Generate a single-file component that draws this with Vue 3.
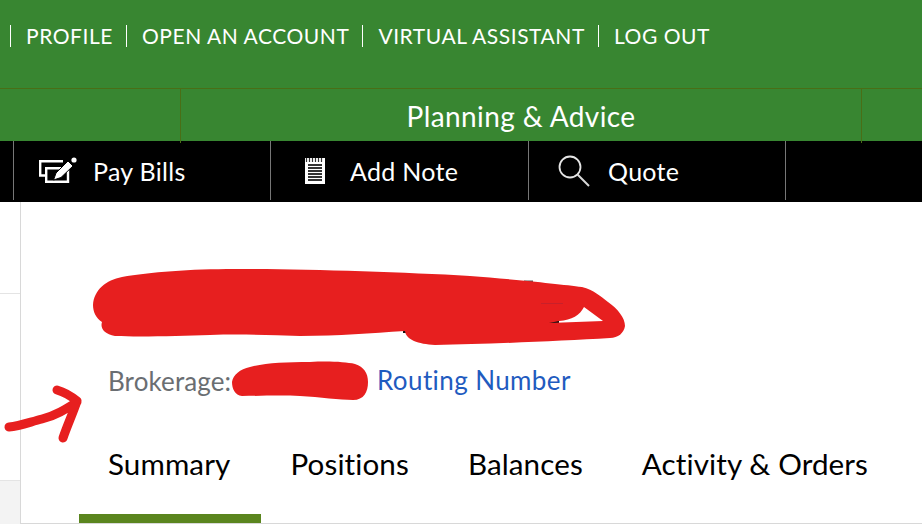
<script setup>
const links = ['PROFILE', 'OPEN AN ACCOUNT', 'VIRTUAL ASSISTANT', 'LOG OUT']
const tabs = ['Summary', 'Positions', 'Balances', 'Activity & Orders']
</script>

<template>
  <div class="page">
    <header class="top">
      <a v-for="l in links" :key="l" class="top-link">{{ l }}</a>
    </header>
    <nav class="nav">
      <div class="nav-side"></div>
      <div class="nav-main">Planning &amp; Advice</div>
      <div class="nav-end"></div>
    </nav>
    <div class="tools">
      <div class="tool">
        <svg class="ic-pay" width="38" height="27" viewBox="0 0 38 27">
          <path d="M24 4.200H1.200V18.500H7" fill="none" stroke="#fff" stroke-width="2.400" />
          <path d="M7.200 11.200H29V24.800H7.200Z" fill="none" stroke="#fff" stroke-width="2.400" />
          <path d="M14.500 23L17 16L29 4L34 9L22 20.500Z" fill="#fff" stroke="#000" stroke-width="1" />
          <circle cx="35" cy="3" r="2.600" fill="#fff" />
        </svg>
        <span>Pay Bills</span>
      </div>
      <div class="tool tool-note">
        <svg class="ic-note" width="20" height="26" viewBox="0 0 20 26">
          <rect width="20" height="26" fill="#fff" />
          <path d="M1.500 0v4M4.500 0v4M7.500 0v4M10.500 0v4M13.500 0v4M16.500 0v4" stroke="#333" stroke-width="1.200" />
          <path d="M3 7H17M3 10H17M3 13H17M3 16H17M3 19H17M3 22H17" stroke="#333" stroke-width="1.800" />
        </svg>
        <span>Add Note</span>
      </div>
      <div class="tool tool-quote">
        <svg class="ic-quote" width="34" height="34" viewBox="0 0 34 34">
          <circle cx="13" cy="13" r="10.500" fill="none" stroke="#e4e4e4" stroke-width="1.800" />
          <path d="M20.500 20.500L32 32" stroke="#d8d8d8" stroke-width="2" />
        </svg>
        <span>Quote</span>
      </div>
    </div>
    <div class="body">
      <aside class="side">
        <div class="side-a"></div>
        <div class="side-b"></div>
        <div class="side-c"></div>
      </aside>
      <main class="panel">
        <div class="acct">
          <span class="acct-label">Brokerage:</span>
          <a class="acct-link">Routing Number</a>
        </div>
        <div class="tabs">
          <div v-for="(t, i) in tabs" :key="t" class="tab" :class="{ active: i === 0 }">{{ t }}</div>
        </div>
      </main>
    </div>
    <svg class="marks" width="922" height="524" viewBox="0 0 922 524">
      <path fill="#555" d="M524 280.500H533V283H524Z" />
      <path fill="#111" d="M403 329H407V333H403Z" />
      <path fill="#111" d="M549 321H559V324H549Z" />
      <path fill="#e71f1f" fill-rule="evenodd" d="M93 305C94 290 106 280 122 277C150 272 190 269 235 269C300 269 400 272 470 276C510 279 560 284 582 287C594 290 600 296 608 302C618 309 625 318 625 326C624 333 618 338 610 338C560 341 490 344 435 345C418 344 406 340 405 331C370 333 340 336 300 336C270 335 240 334 210 335C180 336 140 337 115 336C104 334 100 328 102 322C96 318 93 312 93 305ZM584 307C580 315 572 320 559 321L549 323L603 321Z" />
      <path fill="#c8202a" d="M541 303H563V304H541Z" />
      <path fill="#e71f1f" d="M232 382C233 375 240 369 250 367C265 363 285 362 310 362C330 361 345 362 355 364C364 367 368 373 368 382C368 392 364 400 353 400C340 400 320 397 300 396C280 395 260 396 242 396C235 395 232 389 232 382Z" />
      <path fill="none" stroke="#e71f1f" stroke-width="9" stroke-linecap="round" stroke-linejoin="round" d="M9 427C20 426 30 422 42 419C55 416 66 409 77 402M57 390C64 392 71 396 77 401C73 413 67 426 63 438" />
    </svg>
  </div>
</template>

<style scoped>
.page {
  position: relative;
  width: 922px;
  height: 524px;
  overflow: hidden;
  background: #fff;
  font-family: Lato, "Open Sans", sans-serif;
}
.top {
  height: 88px;
  box-sizing: border-box;
  padding: 25px 0 0 10px;
  display: flex;
  align-items: flex-start;
  background: #388631;
}
.top-link {
  height: 22px;
  line-height: 21px;
  border-left: 1px solid #fff;
  padding: 0 13px 0 15px;
  color: #fff;
  font-size: 21px;
  letter-spacing: 0.55px;
  white-space: nowrap;
}
.nav {
  height: 53px;
  box-sizing: border-box;
  border-top: 1px solid #4a6e16;
  display: grid;
  grid-template-columns: 180px 682px 60px;
  background: #388631;
}
.nav-main {
  border-left: 1px solid #4a6e16;
  border-right: 1px solid #4a6e16;
  text-align: center;
  color: #fff;
  font-size: 28px;
  line-height: 54px;
  letter-spacing: 0.4px;
}
.tools {
  height: 61px;
  box-sizing: border-box;
  padding: 0 0 2px 13px;
  display: grid;
  grid-template-columns: 257px 258px 258px;
  background: #000;
}
.tool {
  display: flex;
  align-items: center;
  gap: 16px;
  padding-left: 25px;
  border-left: 1px solid #777;
  color: #fff;
  font-size: 25px;
  letter-spacing: 0.3px;
  white-space: nowrap;
}
.tool-note {
  gap: 25px;
  padding-left: 34px;
}
.tool-quote {
  gap: 17px;
  padding-left: 28px;
  border-right: 1px solid #777;
}
.ic-pay,
.ic-note,
.ic-quote {
  flex: none;
}
.body {
  height: 322px;
  display: flex;
}
.side {
  width: 20px;
  display: flex;
  flex-direction: column;
}
.side-a {
  height: 91px;
  border-bottom: 1px solid #e4e4e4;
}
.side-b {
  height: 186px;
  border-bottom: 1px solid #e4e4e4;
}
.side-c {
  flex: 1;
  background: #f3f3f3;
}
.panel {
  flex: 1;
  box-sizing: border-box;
  border-left: 1px solid #d8d8d8;
  border-bottom: 1px solid #d8d8d8;
  padding: 164px 0 0 58px;
  display: flex;
  flex-direction: column;
}
.acct {
  display: flex;
  align-items: baseline;
  height: 30px;
  font-size: 26px;
  line-height: 30px;
  white-space: nowrap;
}
.acct-label {
  width: 298px;
  padding-left: 29px;
  box-sizing: border-box;
  color: #6a6e72;
  letter-spacing: 0.1px;
}
.acct-link {
  color: #1f5bbf;
  letter-spacing: 0.4px;
  transform: translateY(-1px);
}
.tabs {
  display: flex;
  margin-top: 50px;
  flex: 1;
}
.tab {
  box-sizing: border-box;
  padding: 0 29.500px;
  height: 77px;
  color: #000;
  font-size: 29.600px;
  letter-spacing: 0.1px;
  line-height: 36px;
  white-space: nowrap;
}
.tab.active {
  width: 182px;
  padding: 0 0 0 29px;
  border-bottom: 9px solid #5a851e;
}
.marks {
  position: absolute;
  left: 0;
  top: 0;
  pointer-events: none;
}
</style>
